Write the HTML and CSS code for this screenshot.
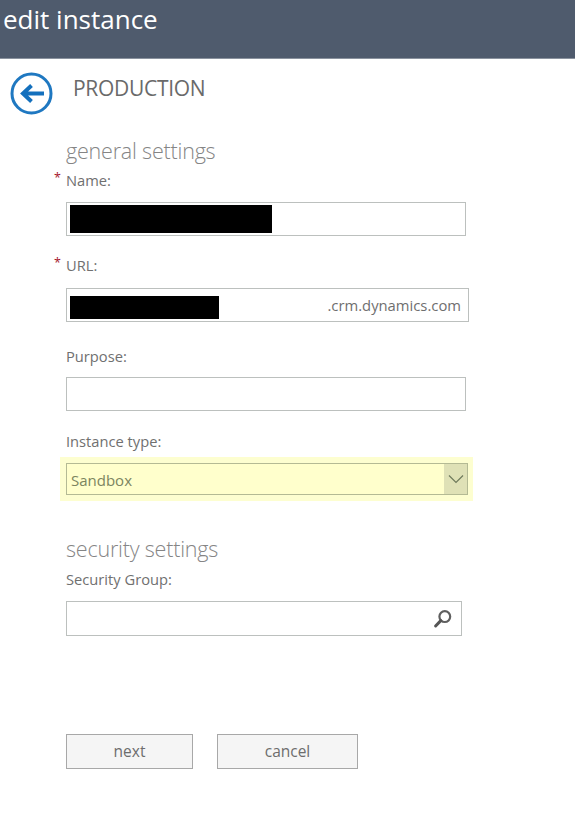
FILE: index.html
```html
<!DOCTYPE html>
<html lang="en">
<head>
    <meta charset="utf-8">
    <meta name="viewport" content="width=device-width, initial-scale=1.0">
    <title>edit instance</title>
    <link rel="stylesheet" href="styles.css">
</head>
<body>
    <div class="header">edit instance</div>

    <div class="title-row">
        <svg class="back-icon" width="44" height="44" viewBox="0 0 44 44">
            <circle cx="21.5" cy="21.5" r="19.5" fill="none" stroke="#1f78c1" stroke-width="3"/>
            <path d="M34 21.5H13M21.5 13.5L13 21.5L21.5 29.5" fill="none" stroke="#1470bd" stroke-width="4"/>
        </svg>
        <div class="title">PRODUCTION</div>
    </div>

    <div class="form">
        <h2 class="section-title">general settings</h2>
        <label class="label required">Name:</label>
        <div class="field field-name">
            <div class="redacted redacted-name"></div>
        </div>

        <label class="label required label-url">URL:</label>
        <div class="field field-url">
            <div class="redacted redacted-url"></div>
            <span class="suffix">.crm.dynamics.com</span>
        </div>

        <label class="label label-purpose">Purpose:</label>
        <div class="field field-name"></div>

        <label class="label label-type">Instance type:</label>
        <div class="select-glow">
            <div class="select">
                <span class="select-value">Sandbox</span>
                <span class="select-arrow">
                    <svg width="16" height="10" viewBox="0 0 16 10">
                        <path d="M1 1.5L8 8.5L15 1.5" fill="none" stroke="#6f7a5c" stroke-width="1.2"/>
                    </svg>
                </span>
            </div>
        </div>

        <h2 class="section-title section-security">security settings</h2>
        <label class="label">Security Group:</label>
        <div class="field field-search">
            <svg class="search-icon" width="20" height="20" viewBox="0 0 20 20">
                <circle cx="11.8" cy="7.6" r="5.4" fill="none" stroke="#5f5f5f" stroke-width="2.2"/>
                <path d="M7.8 11.6L2.6 17" fill="none" stroke="#555" stroke-width="3" stroke-linecap="round"/>
            </svg>
        </div>

        <div class="buttons">
            <button class="btn btn-next">next</button>
            <button class="btn btn-cancel">cancel</button>
        </div>
    </div>
</body>
</html>
```

FILE: styles.css
```css
html, body {
    margin: 0;
    padding: 0;
}

body {
    font-family: "Open Sans", "Noto Sans", Arial, sans-serif;
    background: #fff;
    color: #6d6d6d;
    height: 831px;
    overflow: hidden;
}

.header {
    height: 59px;
    box-sizing: border-box;
    background: #4f5b6d;
    color: #fff;
    font-size: 26px;
    line-height: 39px;
    padding-left: 3px;
    border-bottom: 1px solid #8a929e;
}

.title-row {
    display: flex;
    height: 77px;
    padding-left: 10px;
}

.back-icon {
    margin-top: 13px;
}

.title {
    margin-left: 19px;
    margin-top: 16px;
    font-size: 21px;
    line-height: 26px;
    color: #6a6a6a;
    letter-spacing: -0.3px;
}

.form {
    padding-left: 66px;
    width: 420px;
}

.section-title {
    margin: 0 0 5px;
    font-weight: 300;
    font-size: 21.5px;
    line-height: 30px;
    color: #858585;
    letter-spacing: -0.2px;
}

.label {
    display: block;
    position: relative;
    font-size: 14.7px;
    line-height: 18px;
    color: #707070;
}

.required::before {
    content: "*";
    position: absolute;
    left: -12px;
    top: -2px;
    font-size: 12.5px;
    color: #a5162c;
}

.label-url {
    margin-top: 20px;
}

.label-purpose {
    margin-top: 25px;
}

.label-type {
    margin-top: 21px;
}

.field {
    box-sizing: border-box;
    height: 34px;
    border: 1.5px solid #bcc0be;
    margin-top: 4px;
    background: #fff;
    display: flex;
    align-items: center;
}

.field-name {
    width: 400px;
    margin-top: 13px;
}

.field-url {
    width: 403px;
    margin-top: 14px;
    justify-content: space-between;
    padding: 0 7px 0 3px;
}

.label-purpose + .field {
    margin-top: 12px;
}

.field-search {
    width: 396px;
    height: 35px;
    margin-top: 13px;
    justify-content: flex-end;
    padding-right: 8px;
}

.redacted {
    background: #000;
}

.redacted-name {
    width: 202px;
    height: 28px;
    margin-left: 3px;
}

.redacted-url {
    width: 149px;
    height: 23px;
    margin-top: 4px;
}

.suffix {
    font-size: 14.8px;
    color: #6f6f6f;
}

.select-glow {
    margin: 7px 0 0 -6px;
    width: 413px;
    height: 44px;
    box-sizing: border-box;
    padding: 6px;
    background: #fdfed0;
}

.select {
    display: flex;
    justify-content: space-between;
    height: 32px;
    width: 402px;
    box-sizing: border-box;
    border: 1.5px solid #b4ba94;
    background: #ffffcc;
}

.select-value {
    font-size: 15px;
    line-height: 32px;
    padding-left: 4px;
    color: #7c8560;
}

.select-arrow {
    width: 23px;
    background: #dfe1b6;
    display: flex;
    align-items: center;
    justify-content: center;
}

.section-security {
    margin-top: 33px;
    margin-bottom: 6px;
}

.buttons {
    display: flex;
    gap: 24px;
    margin-top: 98px;
}

.btn {
    height: 35px;
    box-sizing: border-box;
    border: 1.5px solid #a8a8a8;
    background: #f5f5f5;
    color: #6d6d6d;
    font-family: inherit;
    font-size: 15.5px;
    padding: 0 0 2px;
}

.btn-next {
    width: 127px;
}

.btn-cancel {
    width: 141px;
}
```
